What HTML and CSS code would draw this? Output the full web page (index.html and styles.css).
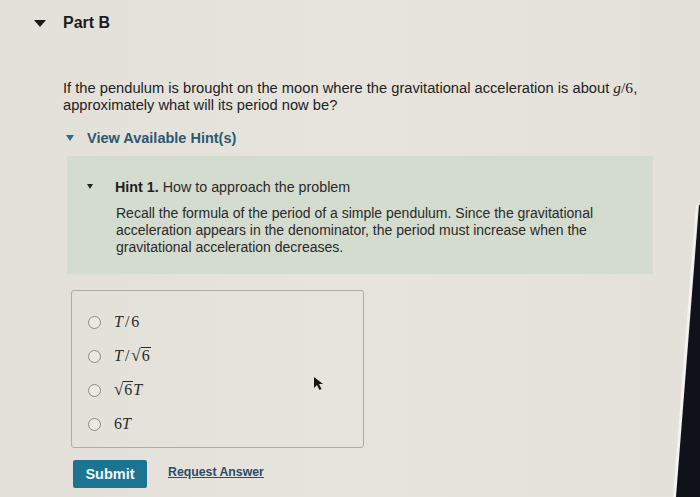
FILE: index.html
```html
<!DOCTYPE html>
<html>
<head>
<meta charset="utf-8">
<link rel="stylesheet" href="styles.css">
</head>
<body>
<div class="page">
  <div class="part-head">
    <span class="tri tri-dark"></span>
    <span class="part-title">Part B</span>
  </div>
  <div class="content">
    <p class="question">If the pendulum is brought on the moon where the gravitational acceleration is about <span class="m">g</span><span class="mn">/6</span>,<br>approximately what will its period now be?</p>
    <div class="hints-toggle">
      <span class="tri tri-teal"></span>
      <span class="hints-label">View Available Hint(s)</span>
    </div>
  </div>
  <div class="hint-box">
    <div class="hint-head">
      <span class="tri tri-small"></span>
      <span><b>Hint 1.</b> How to approach the problem</span>
    </div>
    <p class="hint-body">Recall the formula of the period of a simple pendulum. Since the gravitational acceleration appears in the denominator, the period must increase when the gravitational acceleration decreases.</p>
  </div>
  <div class="answers">
    <div class="opt"><span class="radio"></span><span class="math"><span class="m">T</span><span class="sl">/</span><span class="mn">6</span></span></div>
    <div class="opt"><span class="radio"></span><span class="math"><span class="m">T</span><span class="sl">/</span><span class="sqrt">√</span><span class="rad">6</span></span></div>
    <div class="opt"><span class="radio"></span><span class="math"><span class="sqrt">√</span><span class="rad">6</span><span class="m">T</span></span></div>
    <div class="opt"><span class="radio"></span><span class="math"><span class="mn">6</span><span class="m">T</span></span></div>
  </div>
  <div class="actions">
    <button class="submit">Submit</button>
    <a class="request">Request Answer</a>
  </div>
  <svg class="cursor" width="12" height="16" viewBox="0 0 12 16"><path d="M1 1 L1 12 L4 9 L6.5 14 L8.5 13 L6 8 L10 8 Z" fill="#161616"/></svg>
  <div class="edge-light"></div>
  <div class="edge"></div>
</div>
</body>
</html>
```
FILE: styles.css
```css
* { box-sizing: border-box; }
html, body { margin: 0; padding: 0; }
body {
  width: 700px;
  height: 497px;
  overflow: hidden;
  background: #e5e2db;
  font-family: "Liberation Sans", Arial, sans-serif;
  color: #1f1f1f;
}
.page {
  position: relative;
  width: 700px;
  height: 497px;
  padding-top: 12px;
  background: linear-gradient(90deg, #e3e0d9 0%, #e7e4de 50%, #e4e1da 100%);
}
.tri {
  display: inline-block;
  width: 0;
  height: 0;
  border-left: 6px solid transparent;
  border-right: 6px solid transparent;
  border-top: 7px solid #1a1a1a;
}
.part-head {
  display: flex;
  align-items: center;
  height: 22px;
  padding-left: 34px;
}
.tri-dark { margin-right: 17px; }
.part-title {
  font-size: 16px;
  font-weight: bold;
  color: #1c1c1c;
}
.content { padding-left: 63px; }
.question {
  margin: 45px 0 0 0;
  font-size: 14.7px;
  line-height: 17px;
  color: #222;
}
.m {
  font-family: "Liberation Serif", "Times New Roman", serif;
  font-style: italic;
  font-size: 15.5px;
}
.mn {
  font-family: "Liberation Serif", "Times New Roman", serif;
  font-size: 15.5px;
}
.hints-toggle {
  display: flex;
  align-items: center;
  margin-top: 15px;
  height: 18px;
}
.tri-teal {
  border-left-width: 4px;
  border-right-width: 4px;
  border-top: 6px solid #2b6e8a;
  margin-left: 3px;
  margin-right: 13px;
}
.hints-label {
  font-size: 14.5px;
  font-weight: bold;
  color: #2d5870;
}
.hint-box {
  margin: 9px 0 0 67px;
  width: 586px;
  height: 118px;
  background: #d4dbcf;
  padding: 22px 0 0 20px;
}
.hint-head {
  display: flex;
  align-items: center;
  font-size: 14.3px;
  color: #2a2a2a;
  height: 17px;
}
.hint-head b { color: #1e1e1e; }
.tri-small {
  border-left-width: 3.5px;
  border-right-width: 3.5px;
  border-top-width: 5px;
  border-top-color: #222;
  margin-right: 22px;
}
.hint-body {
  margin: 10px 0 0 29px;
  width: 500px;
  font-size: 14px;
  line-height: 17px;
  color: #2a2a2a;
}
.answers {
  margin: 16px 0 0 71px;
  width: 293px;
  height: 158px;
  border: 1px solid #aeaca6;
  border-radius: 3px;
  padding: 21px 0 0 16px;
  display: flex;
  flex-direction: column;
  gap: 14px;
}
.opt {
  display: flex;
  align-items: center;
  height: 20px;
}
.radio {
  width: 13px;
  height: 13px;
  border: 1.5px solid #8b8a86;
  border-radius: 50%;
  margin-right: 13px;
  background: #ebe9e4;
}
.math {
  font-family: "Liberation Serif", "Times New Roman", serif;
  font-size: 16px;
  color: #2a2a2a;
  display: inline-flex;
  align-items: baseline;
}
.math .m, .math .mn { font-size: 16px; }
.math .m { margin-right: 1px; }
.sl { font-size: 16px; margin: 0 2px 0 1px; }
.sqrt { font-size: 17px; }
.rad {
  border-top: 1px solid #2a2a2a;
  padding: 0 1px;
  line-height: 15px;
}
.actions {
  display: flex;
  align-items: center;
  margin: 12px 0 0 73px;
  gap: 21px;
}
.submit {
  width: 74px;
  height: 28px;
  background: #1b7592;
  color: #f2f6f7;
  border: none;
  border-radius: 2px;
  font-family: "Liberation Sans", Arial, sans-serif;
  font-size: 14.5px;
  font-weight: bold;
  padding: 0;
}
.request {
  font-size: 12.3px;
  font-weight: bold;
  color: #2b4d68;
  text-decoration: underline;
  margin-top: -4px;
}
.cursor {
  position: absolute;
  left: 313px;
  top: 376px;
}
.edge-light {
  position: absolute;
  top: 0;
  right: 0;
  width: 32px;
  height: 497px;
  background: #f4f3f2;
  clip-path: polygon(28px 205px, 30px 205px, 8px 497px, 5px 497px);
}
.edge {
  position: absolute;
  top: 0;
  right: 0;
  width: 30px;
  height: 497px;
  background: #10121a;
  clip-path: polygon(29px 205px, 30px 205px, 30px 497px, 6px 497px);
}
```
